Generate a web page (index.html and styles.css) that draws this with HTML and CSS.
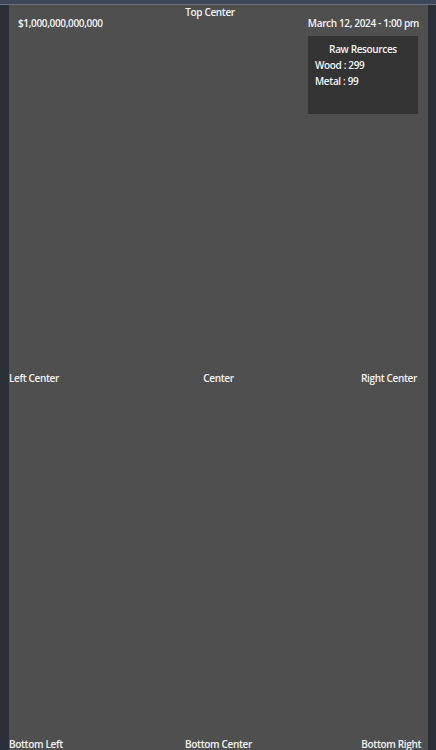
FILE: index.html
```html
<!DOCTYPE html>
<html>
<head>
<meta charset="utf-8">
<link rel="stylesheet" href="styles.css">
</head>
<body>
<div class="topbar"></div>
<div class="frame">
  <div class="gutter-left"></div>
  <main class="panel">
    <div class="top-center">Top Center</div>
    <div class="top-row">
      <div class="money">$1,000,000,000,000</div>
      <div class="right-col">
        <div class="date">March 12, 2024 - 1:00 pm</div>
        <div class="resources">
          <div class="res-title">Raw Resources</div>
          <div class="res-item">Wood : 299</div>
          <div class="res-item">Metal : 99</div>
        </div>
      </div>
    </div>
    <div class="mid-row">
      <span class="mid-left">Left Center</span>
      <span class="mid-center">Center</span>
      <span class="mid-right">Right Center</span>
    </div>
    <div class="bottom-row">
      <span class="bot-left">Bottom Left</span>
      <span class="bot-center">Bottom Center</span>
      <span class="bot-right">Bottom Right</span>
    </div>
  </main>
  <div class="gutter-right"></div>
</div>
</body>
</html>
```

FILE: styles.css
```css
html, body {
  margin: 0;
  padding: 0;
  height: 100%;
  overflow: hidden;
}
body {
  background: #2b2f38;
  font-family: "Open Sans", "Noto Sans", sans-serif;
  font-weight: 600;
  font-size: 10px;
  letter-spacing: -0.35px;
  color: #f4f4f4;
}
.topbar {
  height: 4px;
  background: #3e4759;
  border-bottom: 1px solid #6c7280;
}
.frame {
  display: flex;
  height: 745px;
}
.gutter-left {
  width: 9px;
  flex: none;
}
.gutter-right {
  width: 8px;
  flex: none;
}
.panel {
  flex: 1;
  background: #4f4f4f;
  display: flex;
  flex-direction: column;
  overflow: hidden;
  line-height: 14px;
}
.top-center {
  text-align: center;
  padding-right: 17px;
}
.top-row {
  display: flex;
  justify-content: space-between;
  align-items: flex-start;
  margin-top: -3px;
  padding: 0 9px;
}
.right-col {
  display: flex;
  flex-direction: column;
  align-items: flex-end;
}
.resources {
  width: 110px;
  height: 78px;
  box-sizing: border-box;
  margin-top: 6px;
  margin-right: 1px;
  background: #333333;
  padding: 5px 7px 0;
  line-height: 16px;
}
.res-title {
  text-align: center;
}
.mid-row,
.bottom-row {
  display: grid;
  grid-template-columns: 1fr auto 1fr;
}
.mid-row {
  margin-top: 257px;
}
.bottom-row {
  margin-top: auto;
  margin-bottom: -1px;
}
.mid-right,
.bot-right {
  justify-self: end;
}
.mid-right {
  margin-right: 11px;
}
.bot-right {
  margin-right: 7px;
}
```
